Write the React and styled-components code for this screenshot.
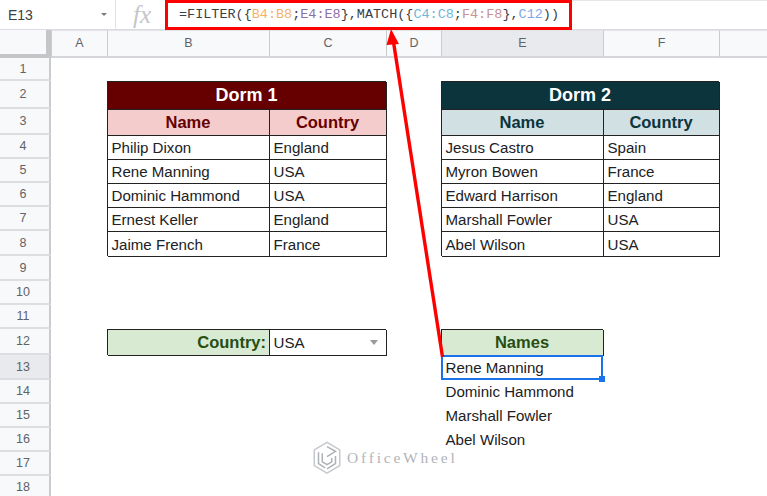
import { Fragment } from "react";
import styled, { createGlobalStyle } from "styled-components";

const colWidths = [56, 162, 117, 55, 162, 116, 49];
const colLetters = ["A", "B", "C", "D", "E", "F", ""];
const rowHeights = [23, 28, 26, 24, 24, 24, 24, 25, 25, 24, 24, 26, 25, 24, 24, 24, 24, 24];

const red = { bg: "#f4cccc", dark: "#660000" };
const teal = { bg: "#d0e0e3", dark: "#0c343d" };

// sheet columns: B = 2, C = 3, E = 5, F = 6
const dorms = [
  { col: 2, theme: red, title: "Dorm 1", people: [
    ["Philip Dixon", "England"],
    ["Rene Manning", "USA"],
    ["Dominic Hammond", "USA"],
    ["Ernest Keller", "England"],
    ["Jaime French", "France"],
  ] },
  { col: 5, theme: teal, title: "Dorm 2", people: [
    ["Jesus Castro", "Spain"],
    ["Myron Bowen", "France"],
    ["Edward Harrison", "England"],
    ["Marshall Fowler", "USA"],
    ["Abel Wilson", "USA"],
  ] },
];

const results = ["Dominic Hammond", "Marshall Fowler", "Abel Wilson"];

function DormTable({ dorm }) {
  const { col, theme, title, people } = dorm;
  return (
    <>
      <TitleCell $col={col} $row={2} $span={2} $dark={theme.dark}>
        {title}
      </TitleCell>
      <HeadCell $col={col} $row={3} $bg={theme.bg} $color={theme.dark}>
        Name
      </HeadCell>
      <HeadCell $col={col + 1} $row={3} $bg={theme.bg} $color={theme.dark}>
        Country
      </HeadCell>
      {people.map(([name, country], i) => (
        <Fragment key={name}>
          <PersonCell $col={col} $row={4 + i}>
            {name}
          </PersonCell>
          <PersonCell $col={col + 1} $row={4 + i}>
            {country}
          </PersonCell>
        </Fragment>
      ))}
    </>
  );
}

export default function App() {
  return (
    <Page>
      <GlobalStyle />
      <FormulaBar>
        <NameBox>
          E13
          <NameCaret />
        </NameBox>
        <FxIcon>fx</FxIcon>
        <FormulaBox>
          =FILTER(&#123;<Ref $c="#f6b26b">B4:B8</Ref>;<Ref $c="#8e6fa8">E4:E8</Ref>&#125;,MATCH(&#123;
          <Ref $c="#6fb8d8">C4:C8</Ref>;<Ref $c="#c9918f">F4:F8</Ref>&#125;,<Ref $c="#7fa6e8">C12</Ref>))
        </FormulaBox>
        <FormulaRest />
      </FormulaBar>

      <Sheet>
        <Corner />
        {colLetters.map((letter, i) => (
          <ColHeader key={i} $active={letter === "E"}>
            {letter}
          </ColHeader>
        ))}
        {rowHeights.map((_, i) => (
          <RowHeader key={i} $row={i + 1} $active={i + 1 === 13}>
            {i + 1}
          </RowHeader>
        ))}

        {dorms.map((dorm) => (
          <DormTable key={dorm.title} dorm={dorm} />
        ))}

        <LabelCell $col={2} $row={12}>Country:</LabelCell>
        <DataCell $col={3} $row={12}>
          USA
          <Caret />
        </DataCell>
        <NamesHead $col={5} $row={12}>Names</NamesHead>
        <ActiveCell $col={5} $row={13}>
          Rene Manning
          <Handle />
        </ActiveCell>
        {results.map((name, i) => (
          <ResultCell key={name} $col={5} $row={14 + i}>
            {name}
          </ResultCell>
        ))}
      </Sheet>

      <Arrow viewBox="0 0 767 496">
        <path d="M442.5 357 L393.5 42" stroke="#ff0000" strokeWidth="3.4" fill="none" />
        <path d="M391 29 L386.5 45 L399 44 Z" fill="#ff0000" />
      </Arrow>

      <Watermark>
        <svg width="30" height="34" viewBox="0 0 30 36" fill="none" stroke="#aeb2b7" strokeWidth="1.6">
          <path d="M15 1.5 L28.5 9.5 V26 L15 34 L1.5 26 V9.5 Z" strokeOpacity="0.7" />
          <path d="M15 6 L24 11 L15 16.5 M6 12 V24 L13 28.5 M24 16 V24 L15 29.5" />
          <path d="M10 13 V22 L15 25 L20 22 V18" />
        </svg>
        <WatermarkText>OfficeWheel</WatermarkText>
      </Watermark>
    </Page>
  );
}

const GlobalStyle = createGlobalStyle`
  html, body {
    margin: 0;
    padding: 0;
    background: #fff;
    overflow: hidden;
  }
`;

const Page = styled.div`
  position: relative;
  width: 767px;
  height: 496px;
  overflow: hidden;
  font-family: "Liberation Sans", Arial, sans-serif;
`;

const FormulaBar = styled.div`
  height: 30px;
  display: flex;
  align-items: center;
  border-bottom: 1px solid #dadce0;
  box-sizing: border-box;
`;

const NameBox = styled.div`
  width: 116px;
  height: 100%;
  padding-left: 8px;
  box-sizing: border-box;
  display: flex;
  align-items: center;
  justify-content: space-between;
  font-size: 14px;
  color: #3c4043;
  border-right: 1px solid #e2e3e5;
`;

const NameCaret = styled.span`
  width: 0;
  height: 0;
  margin-right: 8px;
  border-left: 3.5px solid transparent;
  border-right: 3.5px solid transparent;
  border-top: 3.5px solid #7a7d80;
`;

const FxIcon = styled.div`
  width: 49px;
  text-align: center;
  box-sizing: border-box;
  padding-left: 3px;
  font-family: "Liberation Serif", serif;
  font-style: italic;
  font-size: 25px;
  line-height: 28px;
  color: #c4c6c9;
`;

const FormulaBox = styled.div`
  width: 407px;
  height: 30px;
  box-sizing: border-box;
  border: 3px solid #ff0000;
  padding-left: 11px;
  line-height: 24px;
  font-family: "Liberation Mono", monospace;
  font-size: 13.47px;
  color: #3c4043;
  white-space: nowrap;
`;

const FormulaRest = styled.div`
  flex: 1;
  height: 100%;
  border-top: 1px solid #e6e7e9;
`;

const Ref = styled.span`
  color: ${(p) => p.$c};
`;

const Sheet = styled.div`
  display: grid;
  grid-template-columns: 51px ${colWidths.map((w) => `${w}px`).join(" ")};
  grid-template-rows: 28px ${rowHeights.map((h) => `${h}px`).join(" ")};
`;

const Corner = styled.div`
  background: #f8f9fa;
  border-right: 5px solid #c4c6c9;
  border-bottom: 4px solid #c4c6c9;
`;

const ColHeader = styled.div`
  display: flex;
  align-items: center;
  justify-content: center;
  padding-bottom: 2px;
  font-size: 12.5px;
  color: #5f6368;
  background: ${(p) => (p.$active ? "#e8eaed" : "#f8f9fa")};
  border-left: 1px solid #c9cbce;
  border-bottom: 2px solid #d4d6d9;
  border-top: 1px solid #e2e3e5;
`;

const RowHeader = styled.div`
  grid-column: 1;
  grid-row: ${(p) => p.$row + 1};
  display: flex;
  align-items: center;
  justify-content: center;
  padding-right: 3px;
  font-size: 12.5px;
  color: #5f6368;
  background: ${(p) => (p.$active ? "#e8eaed" : "#f8f9fa")};
  border-right: 2px solid #c9cbce;
  border-bottom: 2px solid #dcdee1;
`;

// the sheet's first grid track is the row header, so sheet column n sits on track n + 1
const PlainCell = styled.div`
  grid-column: ${(p) => p.$col + 1} / span ${(p) => p.$span || 1};
  grid-row: ${(p) => p.$row + 1};
  position: relative;
  display: flex;
  align-items: center;
  padding-left: 4.5px;
  font-size: 15.1px;
  color: #202124;
  white-space: nowrap;
`;

const ResultCell = styled(PlainCell)`
  padding-bottom: 1px;
`;

// each cell draws its own left/top line and one just past its right/bottom edge,
// so neighbours end up sharing a single line
const DataCell = styled(PlainCell)`
  background: #fff;
  box-shadow: inset 1px 1px 0 #222, 1px 1px 0 #222;
`;

const PersonCell = styled(DataCell)`
  padding-top: 1px;
`;

const TitleCell = styled(DataCell)`
  justify-content: center;
  padding: 0;
  font-size: 18px;
  font-weight: 700;
  color: #fff;
  background: ${(p) => p.$dark};
`;

const HeadCell = styled(DataCell)`
  justify-content: center;
  padding: 0;
  font-size: 16.5px;
  font-weight: 700;
  color: ${(p) => p.$color};
  background: ${(p) => p.$bg};
`;

const LabelCell = styled(DataCell)`
  justify-content: flex-end;
  padding: 0 3px 0 0;
  font-size: 16.5px;
  font-weight: 700;
  color: #274e13;
  background: #d9ead3;
`;

const NamesHead = styled(LabelCell)`
  justify-content: center;
  padding: 0;
`;

const ActiveCell = styled(PlainCell)`
  box-sizing: border-box;
  padding-left: 2.5px;
  border: 2px solid #1a73e8;
`;

const Handle = styled.span`
  position: absolute;
  right: -4px;
  bottom: -4px;
  width: 6px;
  height: 6px;
  background: #1a73e8;
`;

const Caret = styled.span`
  position: absolute;
  right: 8px;
  top: 11px;
  width: 0;
  height: 0;
  border-left: 4.5px solid transparent;
  border-right: 4.5px solid transparent;
  border-top: 5px solid #9a9a9a;
`;

const Arrow = styled.svg`
  position: absolute;
  left: 0;
  top: 0;
  width: 767px;
  height: 496px;
  pointer-events: none;
`;

const Watermark = styled.div`
  position: absolute;
  left: 312px;
  top: 441px;
  display: flex;
  align-items: center;
  gap: 5px;
  padding-bottom: 2px;
`;

const WatermarkText = styled.span`
  font-family: "Liberation Serif", serif;
  font-size: 15.5px;
  letter-spacing: 2.8px;
  color: #a9adb3;
  opacity: 0.9;
`;
